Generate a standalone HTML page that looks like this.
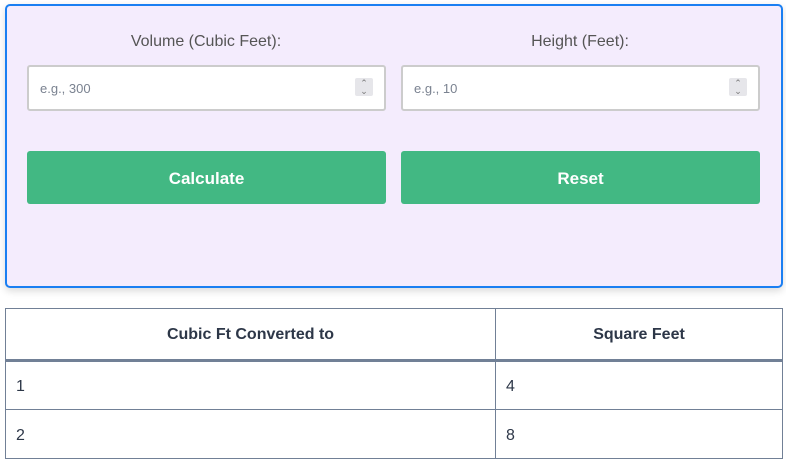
<!DOCTYPE html>
<html><head><style>
*{box-sizing:border-box;margin:0;padding:0}
body{width:786px;height:459px;overflow:hidden;background:#fff;font-family:"Liberation Sans",sans-serif;position:relative}
.panel{position:absolute;left:5px;top:4px;width:778px;height:284px;background:#f4ecfd;border:2px solid #1a7ff2;border-radius:5px;box-shadow:0 3px 8px rgba(0,0,0,.15)}
.lbl{position:absolute;top:33px;font-size:16px;color:#555;text-align:center;width:358px}
.inp{position:absolute;top:65px;width:359px;height:46px;background:#fff;border:2px solid #ccc;border-radius:3px;font-size:13px;color:#7a8290;padding:14px 0 0 11px}
.spin{position:absolute;right:11px;top:11px;width:18px;height:18px;background:#e6e6ea;border-radius:2px;color:#777;font-size:9px;line-height:8px;text-align:center;padding-top:1px}
.btn{position:absolute;top:151px;width:359px;height:53px;background:#42b883;border-radius:3px;color:#fff;font-weight:bold;font-size:17px;text-align:center;line-height:55px}
table{position:absolute;left:5px;top:308px;width:778px;border-collapse:collapse;color:#2d3748;font-size:16px}
td,th{border:1px solid #718096;padding:0 10px}
th{height:52px;font-weight:bold;border-bottom:3px solid #718096;padding-top:2px}
td{height:49px;padding-top:3px}
</style></head><body>
<div class="panel"></div>
<div class="lbl" style="left:27px">Volume (Cubic Feet):</div>
<div class="lbl" style="left:401px">Height (Feet):</div>
<div class="inp" style="left:27px">e.g., 300<div class="spin">⌃<br>⌄</div></div>
<div class="inp" style="left:401px">e.g., 10<div class="spin">⌃<br>⌄</div></div>
<div class="btn" style="left:27px">Calculate</div>
<div class="btn" style="left:401px">Reset</div>
<table>
<tr><th style="width:490px">Cubic Ft Converted to</th><th>Square Feet</th></tr>
<tr><td>1</td><td>4</td></tr>
<tr><td>2</td><td>8</td></tr>
</table>
</body></html>
